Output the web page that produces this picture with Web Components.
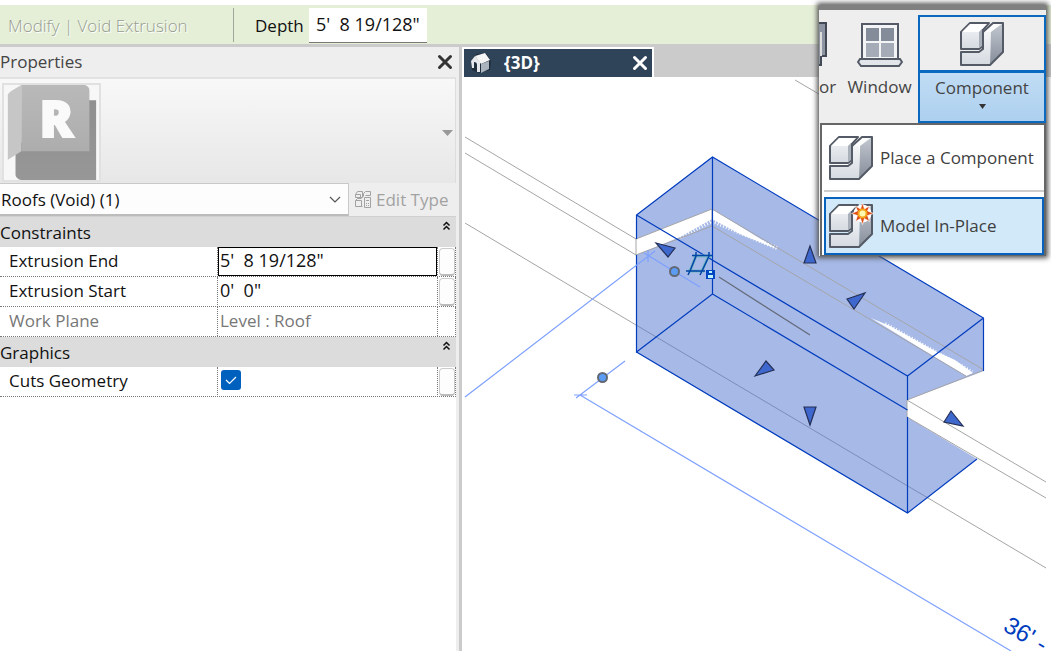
<!DOCTYPE html>
<html lang="en">
<head>
<meta charset="utf-8">
<title>Void Extrusion</title>
<style>
html, body { margin: 0; height: 100%; }
body { font: 17px/24px "Open Sans", "Noto Sans", sans-serif; color: #111; background: #fff; overflow: hidden; }
</style>
</head>
<body>
<app-window></app-window>
<script>
const define = (name, html, setup) => customElements.define(name, class extends HTMLElement {
  connectedCallback() {
    if (this.shadowRoot) return;
    const t = document.createElement('template');
    t.innerHTML = html;
    this.attachShadow({ mode: 'open' }).append(t.content.cloneNode(true));
    if (setup) setup(this, this.shadowRoot);
  }
});

define('options-bar', `
<style>
:host { display: flex; align-items: stretch; height: 39px; background: #e5efd7; border-top: 5px solid #fff; border-bottom: 3px solid #cbcbcb; }
.mode { width: 225px; padding-left: 8px; color: #989d93; font-weight: 300; text-shadow: 1px 1px #fff; border-right: 1px solid #a2a79b; margin: 3px 0 2px; line-height: 36px; white-space: nowrap; }
label { width: 54px; margin-left: 21px; line-height: 41px; font-size: 17px; }
input { box-sizing: border-box; width: 118px; height: 35px; margin-top: 3px; padding: 0 4px 2px 7px; border: 0; border-bottom: 1px solid #777; background: #fff; font: inherit; font-size: 18px; color: inherit; }
</style>
<span class="mode">Modify | Void Extrusion</span>
<label for="d">Depth</label><input id="d" value="5'  8 19/128&quot;">`);

define('close-button', `
<style>
:host { display: block; }
button { display: grid; place-items: center; width: 20px; height: 20px; padding: 0; border: 0; background: none; color: inherit; }
</style>
<button aria-label="Close"><svg width="16" height="16" viewBox="0 0 16 16"><path d="M2.500 2.500l11 11M13.500 2.500l-11 11" fill="none" stroke="currentColor" stroke-width="3" stroke-linecap="round"/></svg></button>`);

define('type-selector', `
<style>
:host { display: block; }
.preview { display: flex; align-items: center; justify-content: space-between; width: 100%; height: 106px; box-sizing: border-box; border: 0; border-top: 2px solid #e2e2e2; border-right: 1px solid #ddd; padding: 2px 1px 0 2px; background: linear-gradient(#f8f8f8, #e7e7e7); }
.thumb { box-sizing: border-box; width: 99px; height: 99px; border: 2px solid #e1e1e1; background: #f7f7f7; display: block; }
.pick { display: flex; height: 33px; align-items: center; }
.combo { flex: 0 0 349px; position: relative; height: 33px; }
select { appearance: none; box-sizing: border-box; width: 100%; height: 33px; padding: 2px 30px 0 1px; border: 1px solid #c9c9c9; border-left: 0; border-bottom: 2px solid #bcbcbc; border-radius: 0; background: #fdfdfd; font: inherit; color: #111; }
.combo svg { position: absolute; right: 8px; top: 12px; pointer-events: none; }
.edit { display: flex; gap: 4px; align-items: center; border: 0; padding: 0 0 0 6px; background: none; font: inherit; color: #a2a2a2; white-space: nowrap; }
</style>
<button class="preview" aria-label="Family type">
<svg class="thumb" viewBox="0 0 99 99"><defs><linearGradient id="g" x2="0" y2="1"><stop stop-color="#b9b9b9"/><stop offset="1" stop-color="#adadad"/></linearGradient><linearGradient id="h" x2="0" y2="1"><stop stop-color="#8f8f8f"/><stop offset="1" stop-color="#979797"/></linearGradient></defs>
<path d="M12 60V94q1 4 6 5H96V16H80V60z" fill="url(#h)"/><path d="M4 13Q3 9 8 6L18 0V69L4 78z" fill="#c6c6c6"/><path d="M18 0H84q5 1 5 6V69H18z" fill="url(#g)"/>
<text x="37" y="54" font-family="Open Sans, Noto Sans" font-weight="800" font-size="52" fill="#fafafa" stroke="#fafafa" stroke-width="2">R</text></svg>
<svg width="13" height="7" viewBox="0 0 13 7"><path d="M1 1h11l-5.500 6z" fill="#999"/></svg>
</button>
<div class="pick"><div class="combo"><select aria-label="Category"><option>Roofs (Void) (1)</option></select>
<svg width="12" height="10" viewBox="0 0 12 10"><path d="M1 2l5 5 5-5" fill="none" stroke="#555" stroke-width="1.200"/></svg></div>
<button class="edit"><svg width="17" height="17" viewBox="0 0 17 17" fill="none" stroke="#a2a2a2"><path d="M.5 3.500l2-3h5v6h-7zM.5 9.500l2-2h4M.5 9.500v6h7M.5 3.500h5v4M8.500 5.500v-3l2-2h5v4h-5M.5 9.500h6v6M9.500 6.500h6v10h-6zM11 9.500h3M11 12.500h1m1 0h1M11 14.500h1m1 0h1"/></svg>Edit Type</button></div>`);

define('property-group', `
<style>
:host { display: block; }
header { display: flex; justify-content: space-between; height: 30px; line-height: 31px; background: #dcdcdc; }
button { align-self: flex-start; margin: 4px 5px 0 0; padding: 0; width: 9px; height: 10px; border: 0; background: none; }
svg { display: block; }
</style>
<header><span><slot name="title"></slot></span><button aria-label="Collapse"><svg width="9" height="10" viewBox="0 0 9 10"><path d="M1.500 4.500l3-3 3 3M1.500 8.500l3-3 3 3" fill="none" stroke="#111" stroke-width="1.500"/></svg></button></header>
<slot></slot>`);

define('property-row', `
<style>
:host { display: grid; grid-template-columns: 217px 1fr 17px; height: 30px; box-sizing: border-box; border-bottom: 1px dotted #777; border-right: 1px dotted #777; background: #fff; }
:host([disabled]) { color: #777; }
label { padding-left: 9px; line-height: 27px; }
.value { border-left: 1px dotted #777; border-right: 1px dotted #777; display: flex; min-width: 0; }
input[type=text] { box-sizing: border-box; width: 100%; min-width: 0; height: 29px; padding: 0 0 3px 1px; border: 1px solid transparent; background: none; font: inherit; font-size: 18px; color: inherit; }
:host([disabled]) input[type=text] { font-size: 17px; }
:host([active]) input { border-color: #000; }
input[type=checkbox] { appearance: none; box-sizing: border-box; width: 20px; height: 20px; margin: 3px; border-radius: 3px; background: #0060bd url("data:image/svg+xml,%3Csvg xmlns='http://www.w3.org/2000/svg' viewBox='0 0 20 20'%3E%3Cpath d='M5 10l3.500 3.500L15 7' fill='none' stroke='white' stroke-width='1.200'/%3E%3C/svg%3E"); }
button { box-sizing: border-box; width: 16px; height: 28px; margin: 1px; padding: 0; border: 1px solid #ccc; border-bottom: 2px solid #bbb; border-radius: 4px; background: #fdfdfd; }
</style>
<label for="v"></label><div class="value"><input id="v"></div>`, (host, root) => {
  root.querySelector('label').textContent = host.getAttribute('label');
  const input = root.querySelector('input');
  if (host.hasAttribute('checked')) { input.type = 'checkbox'; input.checked = true; }
  else { input.type = 'text'; input.value = host.getAttribute('value'); }
  if (host.hasAttribute('disabled')) input.readOnly = true;
  else {
    const b = document.createElement('button');
    b.setAttribute('aria-label', 'Associate parameter');
    root.append(b);
  }
});

define('properties-panel', `
<style>
:host { display: flex; flex-direction: column; box-sizing: border-box; border-right: 3px solid #cbcbcb; padding-right: 3px; background: #eee; min-height: 0; }
.head { display: flex; align-items: center; justify-content: space-between; height: 30px; padding-right: 1px; color: #444; }
close-button { color: #333; }
.list { flex: 1; background: #fff; border-top: 1px solid #d0d0d0; }
</style>
<div class="head"><span>Properties</span><close-button></close-button></div>
<type-selector></type-selector>
<div class="list">
<property-group><span slot="title">Constraints</span>
<property-row label="Extrusion End" value="5'  8 19/128&quot;" active></property-row>
<property-row label="Extrusion Start" value="0'  0&quot;"></property-row>
<property-row label="Work Plane" value="Level : Roof" disabled></property-row></property-group>
<property-group><span slot="title">Graphics</span>
<property-row label="Cuts Geometry" checked></property-row></property-group>
</div>`);

define('view-tabs', `
<style>
:host { display: flex; height: 30px; background: #cbcbcb; }
.tab { display: flex; align-items: center; box-sizing: border-box; width: 192px; padding: 0 2px 0 6px; border: 2px solid #fff; border-bottom: 0; background: #2f4459; color: #fff; }
a { flex: 1; margin-left: 12px; color: inherit; text-decoration: none; font-weight: 700; }
</style>
<div class="tab"><svg width="22" height="22" viewBox="0 0 22 22"><path d="M1 9L6 2 16 1 21 9 20 18 9 21 2 18z" fill="#202d3b"/><path d="M1 9l4-5 5 6v10H7v-7q0-3-3-3v6H2z" fill="#e6e8ec"/><path d="M5 4L15 1l5 7-9 4z" fill="#f5f5f6"/><path d="M11 12l8-3v8l-8 4z" fill="#aab3be"/></svg>
<a href="#">{3D}</a><close-button></close-button></div>`);

// Drawing area: model coordinates are window coordinates, moved by the group's translate.
define('model-canvas', `
<style>
:host { display: block; overflow: hidden; min-height: 0; background: #fff; }
svg { display: block; width: 100%; height: 100%; }
text { font: 24px "Liberation Sans", sans-serif; fill: #003cbe; }
</style>
<svg role="img" aria-label="3D view of void extrusion"><g transform="translate(-462 -77)">
<g fill="#a6b9e7">
<path d="M636 215L712 157 984 318V371L907 400V417L977 459 907 513 636 352V255L680 237 712 219 740 234 777 249 712 209 636 239z"/></g>
<path d="M871 318L890 326 937 352 955 360 973 373 966 376z" fill="#fff"/>
<path d="M680 237L712 221 777 248" fill="none" stroke="#fff" stroke-width="4" stroke-dasharray="1 2"/>
<path d="M885 324L937 353 972 372" fill="none" stroke="#fff" stroke-width="4" stroke-dasharray="1 2"/>
<path d="M636 325L928 498" stroke="#7d8cba" fill="none"/>
<g fill="none" stroke="#a5a5a8">
<path d="M465 137L636 239 712 209 984 370 907 400 1046 482M465 153L636 255 712 226 966 376M636 239V255M712 209V226M907 400V417L1046 498M465 223L636 325M928 498L1046 568M795 80L870 124"/></g>
<g fill="none" stroke="#003cbe" stroke-width="1.200">
<path d="M636.500 239V215L712.500 157 983.500 318V371M636.500 215L907.500 376 983.500 318M907.500 376V400M712.500 157V294L636.500 352V255M636.500 352L907.500 513 977 459M907.500 513V417M712.500 294L907.500 410"/></g>
<path d="M719 277L810 335" stroke="#666b7a" stroke-width="1.300"/>
<g fill="none" stroke="#7ea1ff" stroke-width="1.200"><path d="M465 397L655 251M644 253L700 287M648 250V262M576 398L625 361M574 395H587M580 395L1011 651"/></g>
<g fill="#3f68cf" stroke="#242f55" stroke-width="1.200"><path d="M656 243L675 248 668 257zM810 246L804 263H816zM847 299L865 293 854 309zM804 407H816L810 425zM951 411L963 426 944 422zM755 376L766 361 774 370z"/></g>
<g fill="#5b9cf5" stroke="#626873" stroke-width="2"><circle cx="674.500" cy="271.500" r="4.500"/><circle cx="602.500" cy="377.500" r="4.500"/></g>
<path d="M696 256L690 271M708 257L702 271M693 256H712M688 271H704" fill="none" stroke="#79b7c6" stroke-width="3"/>
<path d="M696 252V256L690 271 688 275M709 252V256L702 271 700 275M692 255.500H712M686 271H705" fill="none" stroke="#0046a8" stroke-width="1.500"/>
<path d="M706 270h9v9h-9z" fill="#0046c2"/><path d="M708 275h5v3h-5zM709 271h3v2h-3z" fill="#bdf3ff"/>
<text transform="translate(1002 630) rotate(30)">36' -</text>
</g></svg>`);

const block = (id) => `<defs><linearGradient id="${id}" x2="0" y2="1"><stop stop-color="#f4f5f7"/><stop offset="1" stop-color="#d5dae1"/></linearGradient><linearGradient id="${id}s" x2="0" y2="1"><stop stop-color="#c3c8d0"/><stop offset="1" stop-color="#858d9a"/></linearGradient></defs>
<path d="M2 31V44H31V11H24V28L20 31z" fill="url(#${id})"/>
<path d="M24 11L34 2H44L32 11z" fill="#fcfcfc"/>
<path d="M32 11L44 2V31L31 44z" fill="url(#${id}s)"/>
<path d="M2 31V44H31L44 31V2H34L24 11V28L20 31z" fill="none" stroke="#555b66" stroke-width="2" stroke-linejoin="round"/>
<path d="M2 11L11 2H30L23 10V26L20 28H2z" fill="url(#${id})" stroke="#555b66" stroke-width="2" stroke-linejoin="round"/>
<path d="M3 11L11 3H28L20 11z" fill="#fff"/><path d="M20 11L23 8V25L20 27z" fill="#aab0ba"/>`;

define('component-icon', `<style>:host { display: block; } svg { display: block; overflow: visible; }</style>
<svg width="46" height="46" viewBox="0 0 46 46">${block('b')}<g id="star" display="none"><circle cx="34.500" cy="10.500" r="9" fill="#fff"/><path d="M34.500 0l2 6 5-3-2 5 6 2.500-6 2 2 6-5-3-2 6-2-6-5 3 2-6-6-2 6-2.500-2-5 5 3z" fill="#de4a12" stroke="#fff" stroke-width=".6"/><circle cx="34.500" cy="10.500" r="4" fill="#fffbb0" stroke="#f5a81e" stroke-width="2"/></g></svg>`,
(host, root) => { if (host.hasAttribute('in-place')) root.getElementById('star').removeAttribute('display'); });

define('component-menu', `
<style>
:host { display: block; box-sizing: border-box; margin-left: 1px; border: 2px solid #666; border-bottom-width: 1px; background: #fff; padding: 0 0 0 2px; }
button { display: flex; align-items: center; gap: 6px; box-sizing: border-box; width: 100%; height: 58px; padding: 0 2px; border: 2px solid transparent; background: none; font: inherit; color: #3f3f3f; white-space: nowrap; }
.first { height: 65px; }
hr { height: 2px; margin: 0 0 5px; border: 0; background: #ccc; }
.on { background: #d1e9f8; border-color: #0762bd; }
</style>
<button class="first"><component-icon></component-icon>Place a Component</button><hr>
<button class="on"><component-icon in-place></component-icon>Model In-Place</button>`);

define('ribbon-popup', `
<style>
:host { display: block; box-sizing: border-box; width: 227px; background: #eee; border-top: 5px solid #808080; box-shadow: 0 0 5px 2px #555; color: #444; }
.tools { display: grid; grid-template-columns: 22px 77px 128px; height: 113px; }
button { box-sizing: border-box; border: 0; padding: 0; background: none; font: inherit; color: inherit; }
.door, .window { display: flex; flex-direction: column; align-items: center; padding-top: 11px; gap: 6px; }
.door { align-items: flex-start; }
svg { display: block; flex: none; }
.comp { display: flex; flex-direction: column; margin: 5px 0 0 0; }
.top { height: 57px; border: 2px solid #0b68bf; display: grid; place-items: center; }
.bottom { height: 51px; border: 2px solid #0b68bf; border-top-width: 1px; background: linear-gradient(#c1dcf4, #add0ef); display: flex; flex-direction: column; align-items: center; justify-content: flex-start; padding-top: 3px; gap: 4px; }
</style>
<div class="tools">
<button class="door"><svg width="10" height="48" viewBox="0 0 10 48"><path d="M-3 2H7V35H2V44H-3z" fill="#8d95a2" stroke="#444a55" stroke-width="2"/><path d="M2 11V35" stroke="#ddd" stroke-width="2"/></svg><span>or</span></button>
<button class="window"><svg width="46" height="48" viewBox="0 0 46 48"><path d="M5 3H41V39H5z" fill="#f3f4f6" stroke="#555b66" stroke-width="2"/><path d="M9 7H22V20H9zM24 7H37V20H24z" fill="#848c9a"/><path d="M9 22H22V36H9zM24 22H37V36H24z" fill="#a5acb7"/><path d="M3 38H43L45 41 42 45H4L1 41z" fill="#e2e5e9" stroke="#555b66" stroke-width="2"/></svg><span>Window</span></button>
<div class="comp"><button class="top" aria-label="Component"><component-icon></component-icon></button>
<button class="bottom"><span>Component</span><svg width="7" height="5" viewBox="0 0 7 5"><path d="M0 0h7L3.500 5z" fill="#333"/></svg></button></div>
</div>
<component-menu></component-menu>`);

define('app-window', `
<style>
:host { display: grid; grid-template-rows: auto 1fr; height: 100vh; position: relative; overflow: hidden; }
.work { display: grid; grid-template-columns: 462px 1fr; min-height: 0; }
.view { display: grid; grid-template-rows: auto 1fr; min-width: 0; min-height: 0; }
ribbon-popup { position: absolute; top: 5px; right: 5px; }
</style>
<options-bar></options-bar>
<div class="work"><properties-panel></properties-panel><div class="view"><view-tabs></view-tabs><model-canvas></model-canvas></div></div>
<ribbon-popup></ribbon-popup>`);
</script>
</body>
</html>
